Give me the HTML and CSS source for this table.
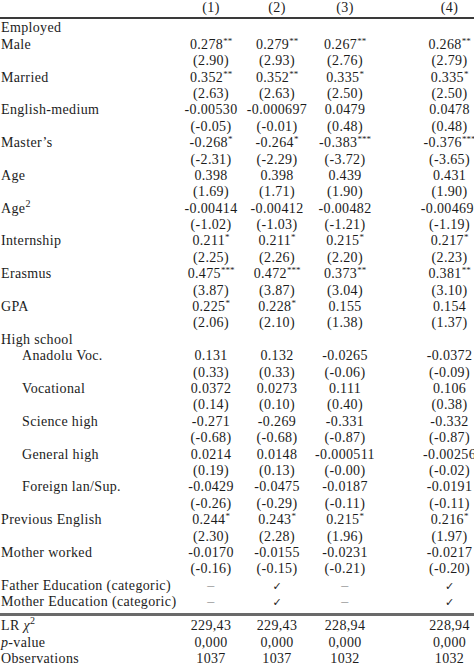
FILE: index.html
```html
<!DOCTYPE html>
<html>
<head>
<meta charset="utf-8">
<link rel="stylesheet" href="styles.css">
</head>
<body>
<div class="table">
  <div class="row head"><div class="lab"></div><div class="c">(1)</div><div class="c">(2)</div><div class="c">(3)</div><div class="c">(4)</div></div>
  <div class="body">
    <div class="row"><div class="lab">Employed</div><div class="c"></div><div class="c"></div><div class="c"></div><div class="c"></div></div>
    <div class="row"><div class="lab">Male</div><div class="c">0.278<sup>**</sup></div><div class="c">0.279<sup>**</sup></div><div class="c">0.267<sup>**</sup></div><div class="c">0.268<sup>**</sup></div></div>
    <div class="row"><div class="lab"></div><div class="c">(2.90)</div><div class="c">(2.93)</div><div class="c">(2.76)</div><div class="c">(2.79)</div></div>
    <div class="row"><div class="lab">Married</div><div class="c">0.352<sup>**</sup></div><div class="c">0.352<sup>**</sup></div><div class="c">0.335<sup>*</sup></div><div class="c">0.335<sup>*</sup></div></div>
    <div class="row"><div class="lab"></div><div class="c">(2.63)</div><div class="c">(2.63)</div><div class="c">(2.50)</div><div class="c">(2.50)</div></div>
    <div class="row"><div class="lab">English-medium</div><div class="c">-0.00530</div><div class="c">-0.000697</div><div class="c">0.0479</div><div class="c">0.0478</div></div>
    <div class="row"><div class="lab"></div><div class="c">(-0.05)</div><div class="c">(-0.01)</div><div class="c">(0.48)</div><div class="c">(0.48)</div></div>
    <div class="row"><div class="lab">Master’s</div><div class="c">-0.268<sup>*</sup></div><div class="c">-0.264<sup>*</sup></div><div class="c">-0.383<sup>***</sup></div><div class="c">-0.376<sup>***</sup></div></div>
    <div class="row"><div class="lab"></div><div class="c">(-2.31)</div><div class="c">(-2.29)</div><div class="c">(-3.72)</div><div class="c">(-3.65)</div></div>
    <div class="row"><div class="lab">Age</div><div class="c">0.398</div><div class="c">0.398</div><div class="c">0.439</div><div class="c">0.431</div></div>
    <div class="row"><div class="lab"></div><div class="c">(1.69)</div><div class="c">(1.71)</div><div class="c">(1.90)</div><div class="c">(1.90)</div></div>
    <div class="row"><div class="lab">Age<sup class="p">2</sup></div><div class="c">-0.00414</div><div class="c">-0.00412</div><div class="c">-0.00482</div><div class="c">-0.00469<sup>*</sup></div></div>
    <div class="row"><div class="lab"></div><div class="c">(-1.02)</div><div class="c">(-1.03)</div><div class="c">(-1.21)</div><div class="c">(-1.19)</div></div>
    <div class="row"><div class="lab">Internship</div><div class="c">0.211<sup>*</sup></div><div class="c">0.211<sup>*</sup></div><div class="c">0.215<sup>*</sup></div><div class="c">0.217<sup>*</sup></div></div>
    <div class="row"><div class="lab"></div><div class="c">(2.25)</div><div class="c">(2.26)</div><div class="c">(2.20)</div><div class="c">(2.23)</div></div>
    <div class="row"><div class="lab">Erasmus</div><div class="c">0.475<sup>***</sup></div><div class="c">0.472<sup>***</sup></div><div class="c">0.373<sup>**</sup></div><div class="c">0.381<sup>**</sup></div></div>
    <div class="row"><div class="lab"></div><div class="c">(3.87)</div><div class="c">(3.87)</div><div class="c">(3.04)</div><div class="c">(3.10)</div></div>
    <div class="row"><div class="lab">GPA</div><div class="c">0.225<sup>*</sup></div><div class="c">0.228<sup>*</sup></div><div class="c">0.155</div><div class="c">0.154</div></div>
    <div class="row"><div class="lab"></div><div class="c">(2.06)</div><div class="c">(2.10)</div><div class="c">(1.38)</div><div class="c">(1.37)</div></div>
    <div class="row"><div class="lab">High school</div><div class="c"></div><div class="c"></div><div class="c"></div><div class="c"></div></div>
    <div class="row"><div class="lab ind">Anadolu Voc.</div><div class="c">0.131</div><div class="c">0.132</div><div class="c">-0.0265</div><div class="c">-0.0372</div></div>
    <div class="row"><div class="lab"></div><div class="c">(0.33)</div><div class="c">(0.33)</div><div class="c">(-0.06)</div><div class="c">(-0.09)</div></div>
    <div class="row"><div class="lab ind">Vocational</div><div class="c">0.0372</div><div class="c">0.0273</div><div class="c">0.111</div><div class="c">0.106</div></div>
    <div class="row"><div class="lab"></div><div class="c">(0.14)</div><div class="c">(0.10)</div><div class="c">(0.40)</div><div class="c">(0.38)</div></div>
    <div class="row"><div class="lab ind">Science high</div><div class="c">-0.271</div><div class="c">-0.269</div><div class="c">-0.331</div><div class="c">-0.332</div></div>
    <div class="row"><div class="lab"></div><div class="c">(-0.68)</div><div class="c">(-0.68)</div><div class="c">(-0.87)</div><div class="c">(-0.87)</div></div>
    <div class="row"><div class="lab ind">General high</div><div class="c">0.0214</div><div class="c">0.0148</div><div class="c">-0.000511</div><div class="c">-0.00256</div></div>
    <div class="row"><div class="lab"></div><div class="c">(0.19)</div><div class="c">(0.13)</div><div class="c">(-0.00)</div><div class="c">(-0.02)</div></div>
    <div class="row"><div class="lab ind">Foreign lan/Sup.</div><div class="c">-0.0429</div><div class="c">-0.0475</div><div class="c">-0.0187</div><div class="c">-0.0191</div></div>
    <div class="row"><div class="lab"></div><div class="c">(-0.26)</div><div class="c">(-0.29)</div><div class="c">(-0.11)</div><div class="c">(-0.11)</div></div>
    <div class="row"><div class="lab">Previous English</div><div class="c">0.244<sup>*</sup></div><div class="c">0.243<sup>*</sup></div><div class="c">0.215<sup>*</sup></div><div class="c">0.216<sup>*</sup></div></div>
    <div class="row"><div class="lab"></div><div class="c">(2.30)</div><div class="c">(2.28)</div><div class="c">(1.96)</div><div class="c">(1.97)</div></div>
    <div class="row"><div class="lab">Mother worked</div><div class="c">-0.0170</div><div class="c">-0.0155</div><div class="c">-0.0231</div><div class="c">-0.0217</div></div>
    <div class="row"><div class="lab"></div><div class="c">(-0.16)</div><div class="c">(-0.15)</div><div class="c">(-0.21)</div><div class="c">(-0.20)</div></div>
    <div class="row"><div class="lab">Father Education (categoric)</div><div class="c dash">–</div><div class="c"><span class="chk">✓</span></div><div class="c dash">–</div><div class="c"><span class="chk">✓</span></div></div>
    <div class="row"><div class="lab">Mother Education (categoric)</div><div class="c dash">–</div><div class="c"><span class="chk">✓</span></div><div class="c dash">–</div><div class="c"><span class="chk">✓</span></div></div>
  </div>
  <div class="foot">
    <div class="row"><div class="lab">LR <i class="chi">χ</i><sup class="p">2</sup></div><div class="c">229,43</div><div class="c">229,43</div><div class="c">228,94</div><div class="c">228,94</div></div>
    <div class="row"><div class="lab"><i>p</i>-value</div><div class="c">0,000</div><div class="c">0,000</div><div class="c">0,000</div><div class="c">0,000</div></div>
    <div class="row"><div class="lab">Observations</div><div class="c">1037</div><div class="c">1037</div><div class="c">1032</div><div class="c">1032</div></div>
  </div>
</div>
</body>
</html>
```
FILE: styles.css
```css
html, body {
  margin: 0;
  padding: 0;
  overflow: hidden;
  background: #fff;
}
body {
  width: 474px;
  height: 669px;
  font-family: "Liberation Serif", "Times New Roman", serif;
  font-size: 14px;
  letter-spacing: 0.35px;
  color: #1c1c1c;
}
.table {
  width: 519px;
}
.row {
  display: grid;
  grid-template-columns: 178px 66px 66px 70px 139px;
  height: 16.4px;
  line-height: 16.4px;
  white-space: nowrap;
}
.head {
  height: 17.4px;
  border-bottom: 2px solid #3a3a3a;
  line-height: 15.4px;
}
.body {
  padding-top: 1px;
  border-bottom: 3px solid #6a6a6a;
  padding-bottom: 3px;
}
.foot {
  padding-top: 2px;
}
.lab {
  padding-left: 1px;
}
.lab.ind {
  padding-left: 22px;
}
.c {
  text-align: center;
}
sup {
  font-size: 9px;
  line-height: 0;
  vertical-align: 5px;
  letter-spacing: 0;
}
sup.p {
  font-size: 10px;
  vertical-align: 6px;
}
.chi {
  font-style: italic;
}
.dash {
  color: #9a9a9a;
}
.chk {
  font-family: "DejaVu Sans", sans-serif;
  font-size: 11px;
  letter-spacing: 0;
}
```
